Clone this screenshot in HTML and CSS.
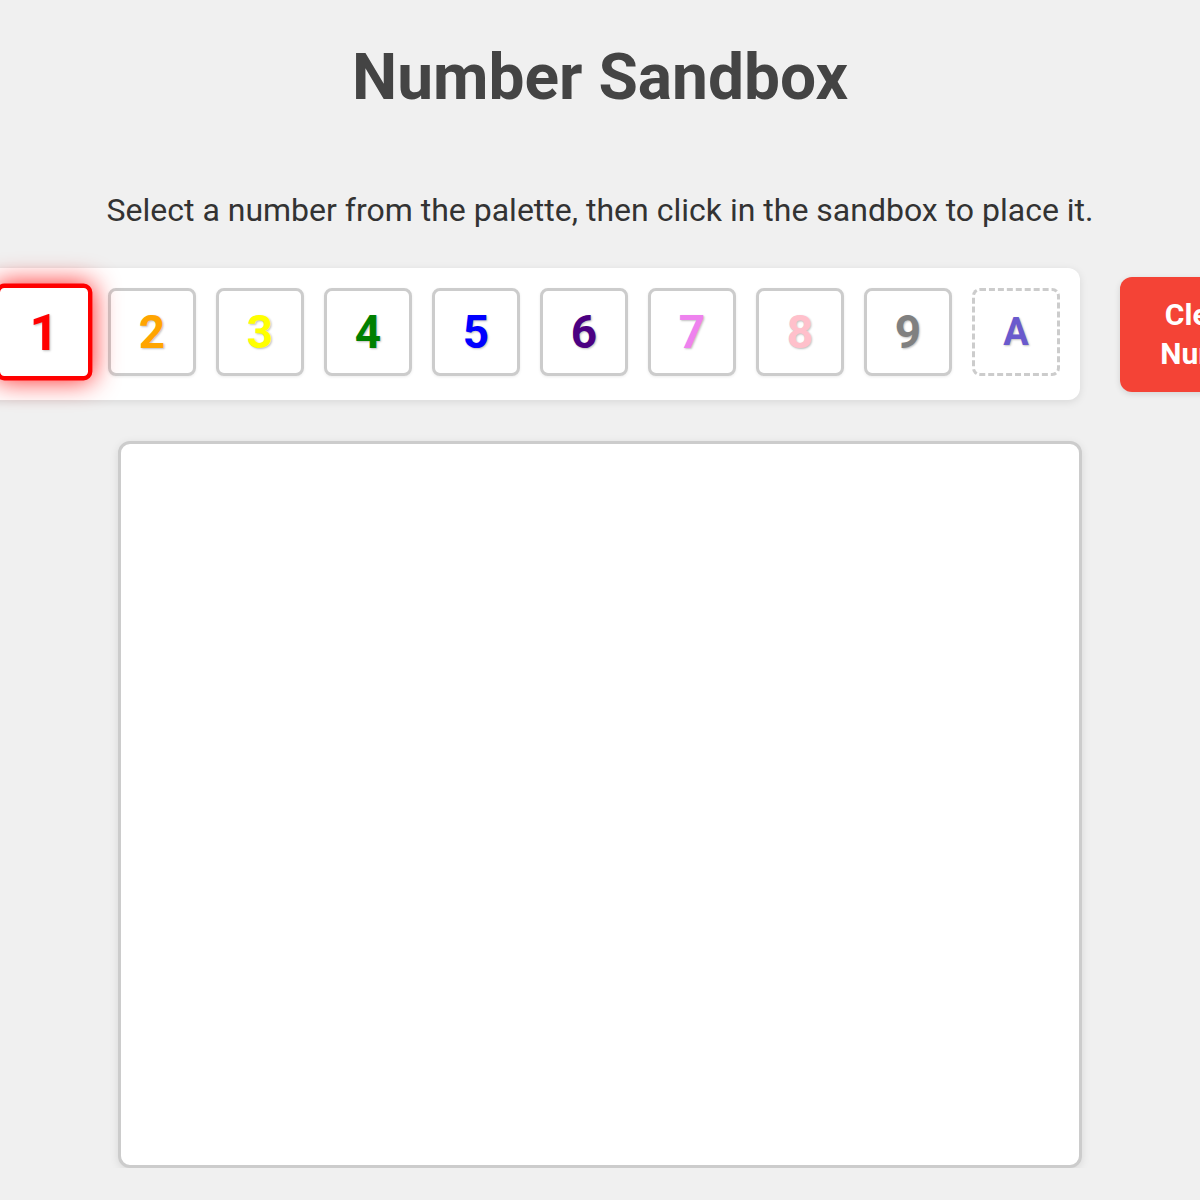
FILE: index.html
```html
<!DOCTYPE html>
<html lang="en">
<head>
<meta charset="utf-8">
<title>Number Sandbox</title>
<link rel="stylesheet" href="styles.css">
</head>
<body>
  <h1 class="title">Number Sandbox</h1>
  <p class="hint">Select a number from the palette, then click in the sandbox to place it.</p>
  <div class="controls">
    <div class="palette">
      <div class="item selected c1">1</div>
      <div class="item c2">2</div>
      <div class="item c3">3</div>
      <div class="item c4">4</div>
      <div class="item c5">5</div>
      <div class="item c6">6</div>
      <div class="item c7">7</div>
      <div class="item c8">8</div>
      <div class="item c9">9</div>
      <div class="item dashed cA">A</div>
    </div>
    <button class="clear">Clear All Numbers</button>
  </div>
  <div class="sandbox"></div>
</body>
</html>
```

FILE: styles.css
```css
html, body {
  margin: 0;
  padding: 0;
  overflow-x: hidden;
}
body {
  background: #f0f0f0;
  font-family: Roboto, "Liberation Sans", Arial, sans-serif;
  color: #333;
}
.title {
  margin: 40px 0 0;
  font-size: 64px;
  line-height: 1.2;
  font-weight: 700;
  color: #444;
  text-align: center;
}
.hint {
  margin: 74px 0 0;
  font-size: 32px;
  line-height: 1.2;
  text-align: center;
  color: #333;
}
.controls {
  display: flex;
  align-items: center;
  gap: 40px;
  margin: 39px 0 0 -20px;
  width: max-content;
}
.palette {
  display: flex;
  gap: 20px;
  padding: 20px 20px 24px;
  background: #fff;
  border-radius: 12px;
  box-shadow: 0 2px 8px rgba(0, 0, 0, 0.1);
}
.item {
  width: 88px;
  height: 88px;
  box-sizing: border-box;
  border: 3px solid #ccc;
  border-radius: 8px;
  background: #fff;
  display: flex;
  align-items: center;
  justify-content: center;
  font-size: 46px;
  font-weight: 700;
  text-shadow: 1px 1px 2px rgba(0, 0, 0, 0.25);
  box-shadow: 0 1px 3px rgba(0, 0, 0, 0.08);
}
.item.selected {
  border: 4px solid #ff0000;
  transform: scale(1.1);
  box-shadow: 0 0 24px rgba(255, 0, 0, 0.85);
}
.item.dashed {
  border: 3px dashed #ccc;
  font-size: 38px;
  box-shadow: none;
}
.c1 { color: #ff0000; }
.c2 { color: #ffa500; }
.c3 { color: #ffff00; }
.c4 { color: #008000; }
.c5 { color: #0000ff; }
.c6 { color: #4b0082; }
.c7 { color: #ee82ee; }
.c8 { color: #ffc0cb; }
.c9 { color: #808080; }
.cA { color: #6a5acd; }
.clear {
  width: 204px;
  height: 115px;
  padding: 0 20px;
  border: none;
  border-radius: 12px;
  background: #f44336;
  color: #fff;
  font-family: Roboto, "Liberation Sans", Arial, sans-serif;
  font-size: 30px;
  line-height: 39px;
  font-weight: 700;
  text-align: center;
  box-shadow: 0 2px 6px rgba(0, 0, 0, 0.12);
}
.sandbox {
  width: 964px;
  height: 727px;
  box-sizing: border-box;
  margin: 41px auto 0;
  background: #fff;
  border: 3px solid #ccc;
  border-radius: 12px;
  box-shadow: 0 2px 8px rgba(0, 0, 0, 0.1);
}
```
